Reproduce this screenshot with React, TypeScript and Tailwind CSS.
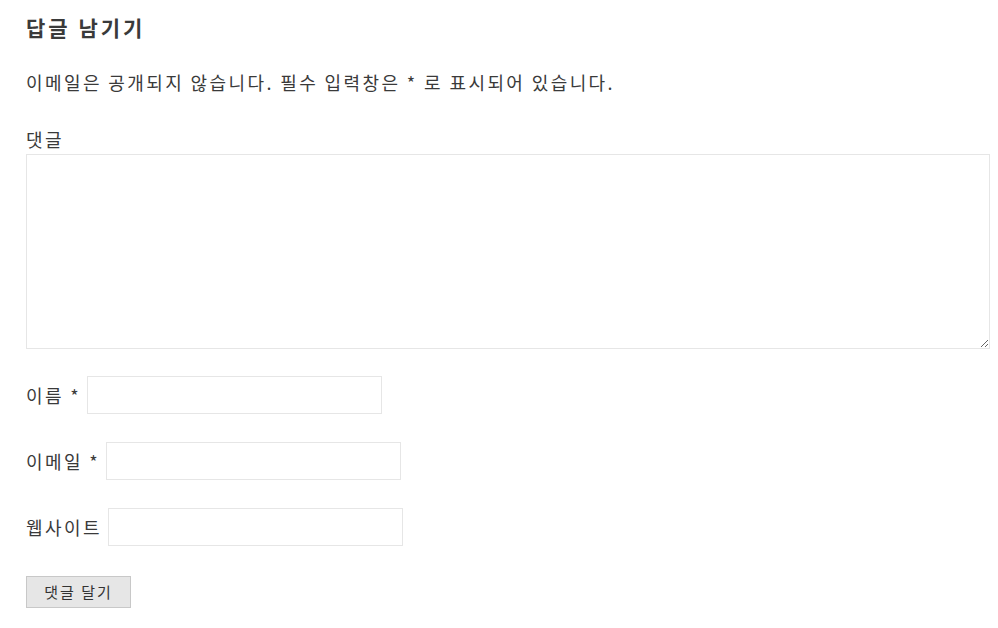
import React from 'react';

const font = { fontFamily: '"Noto Sans CJK KR", "Noto Sans", sans-serif' };

function Field({ label, required }: { label: string; required?: boolean }) {
  return (
    <p className="flex items-center h-[38px]">
      <label className="mr-[6px]">
        {label}
        {required && <span> *</span>}
      </label>
      <input
        type="text"
        className="w-[295px] h-[38px] border border-[#e6e6e6] bg-white outline-none px-2"
      />
    </p>
  );
}

export default function App() {
  return (
    <div
      className="bg-white min-h-[628px] pl-[26px] pr-[8px] pt-[10px] text-[#3a3a3a] text-[18px] tracking-[2.4px]"
      style={font}
    >
      <h3 className="text-[21px] font-bold leading-[34px] tracking-[3px]">답글 남기기</h3>
      <p className="mt-[23px] leading-[30px]">이메일은 공개되지 않습니다. 필수 입력창은 * 로 표시되어 있습니다.</p>
      <div className="mt-[27px]">
        <label className="block leading-[30px]">댓글</label>
        <textarea className="block w-full h-[195px] border border-[#e6e6e6] bg-white outline-none p-2" />
      </div>
      <div className="mt-[27px] flex flex-col gap-[28px]">
        <Field label="이름" required />
        <Field label="이메일" required />
        <Field label="웹사이트" />
      </div>
      <button className="mt-[30px] w-[105px] h-[32px] bg-[#e6e6e6] border border-[#c8c8c8] text-[15px] text-[#333] tracking-[2px]">
        댓글 달기
      </button>
    </div>
  );
}
